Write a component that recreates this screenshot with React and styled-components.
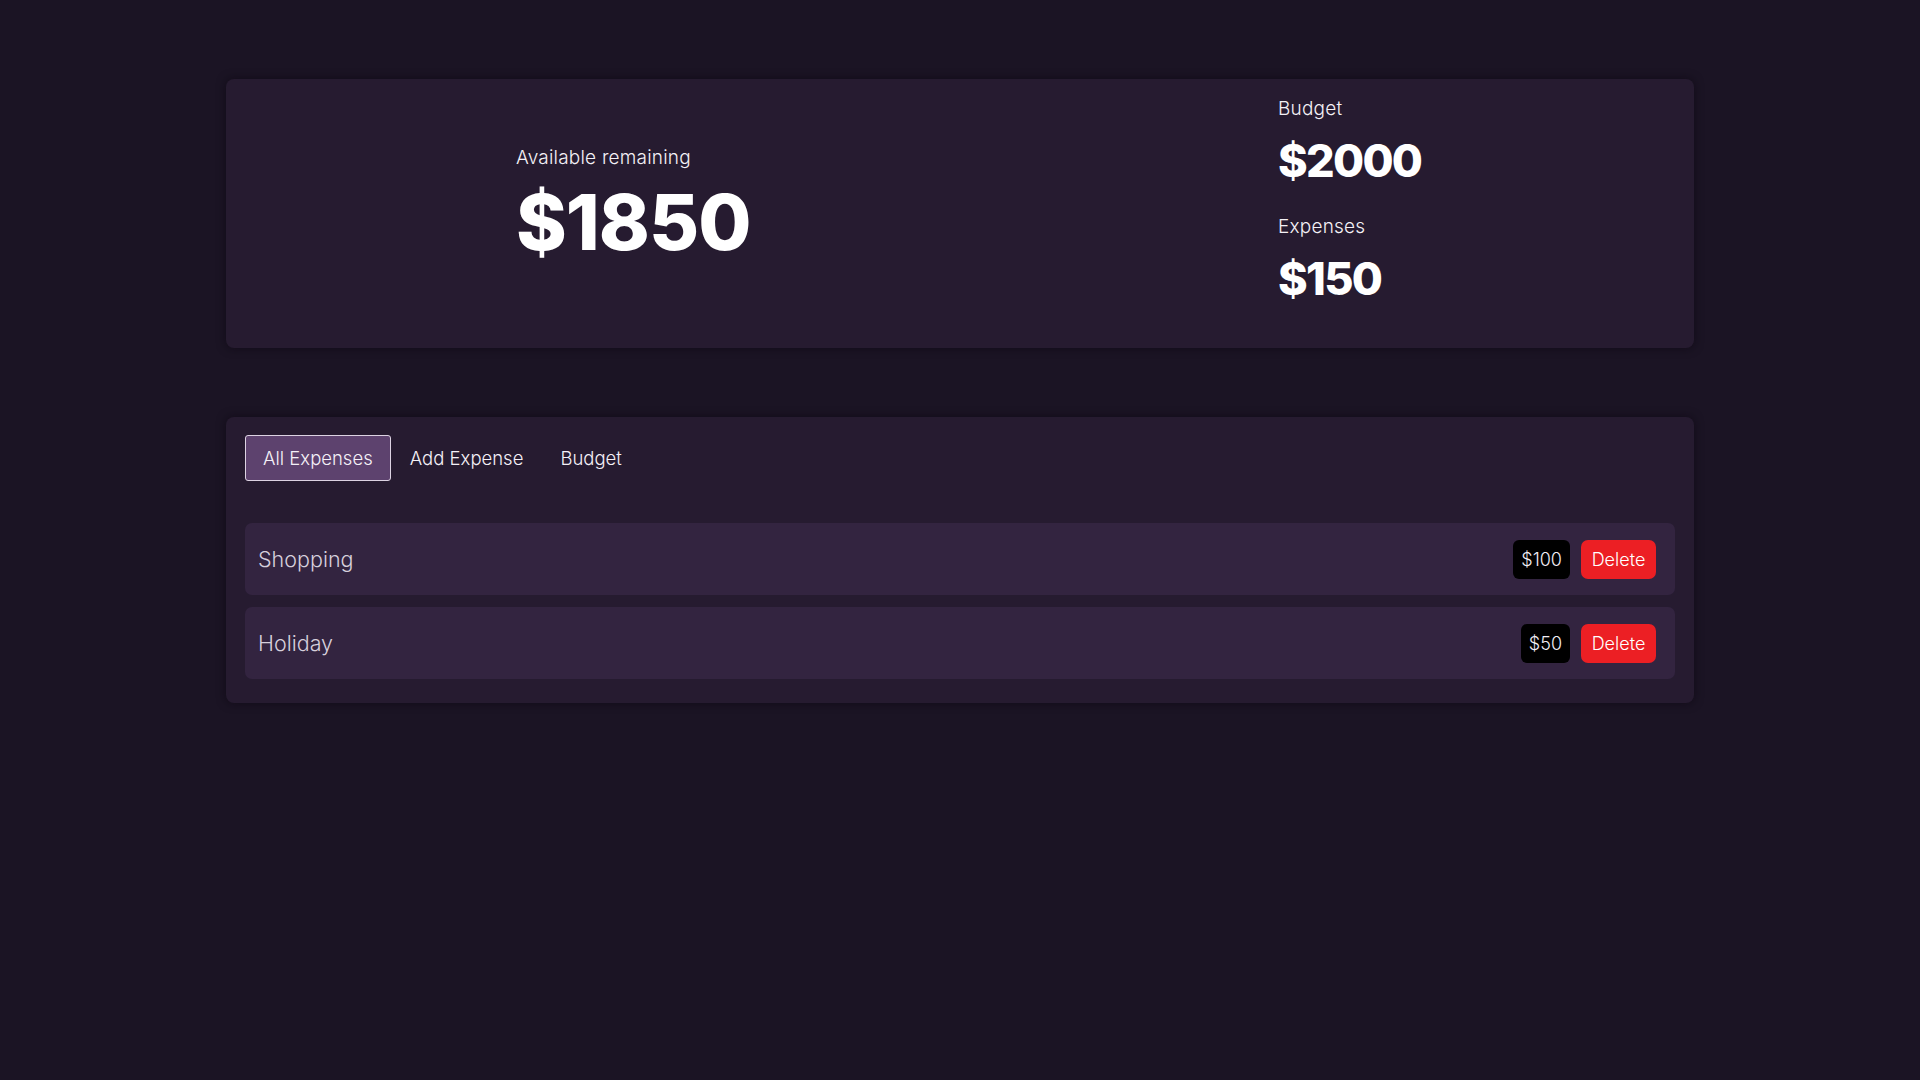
import React from "react";
import styled, { createGlobalStyle } from "styled-components";

const Global = createGlobalStyle`
  html, body { margin: 0; padding: 0; background: #1b1424; }
  body { font-family: Inter, "Open Sans", "Noto Sans", sans-serif; color: #fff; }
  * { box-sizing: border-box; }
`;

const Page = styled.div`
  min-height: 1080px;
  padding-top: 79px;
  background: #1b1424;
`;

const Container = styled.div`
  width: 1468px;
  margin: 0 auto;
  display: flex;
  flex-direction: column;
  gap: 69px;
`;

const Card = styled.section`
  background: #261b30;
  border-radius: 8px;
  box-shadow: 0 0 10px rgba(10, 5, 15, 0.6);
`;

const Summary = styled(Card)`
  height: 269px;
  display: grid;
  grid-template-columns: 734px 734px;
`;

const Remaining = styled.div`
  padding-left: 290px;
  padding-top: 65px;
`;

const Stats = styled.div`
  padding-left: 318px;
  padding-top: 16px;
  display: flex;
  flex-direction: column;
`;

const Label = styled.div`
  font-size: 19px;
  font-weight: 300;
  line-height: 27px;
  color: #f4f1f6;
  letter-spacing: 0.2px;
`;

const BigAmount = styled.div`
  font-size: 77px;
  font-weight: 800;
  line-height: 1;
  margin-top: 13px;
  letter-spacing: -1px;
`;

const Amount = styled.div`
  font-size: 45px;
  font-weight: 800;
  line-height: 1;
  margin-top: 16px;
  margin-bottom: 30px;
  letter-spacing: -1.7px;
`;

const ListCard = styled(Card)`
  padding: 18px 19px 24px;
`;

const Tabs = styled.div`
  display: flex;
  gap: 1px;
  margin-bottom: 42px;
`;

const Tab = styled.button`
  font-family: inherit;
  font-size: 18.5px;
  font-weight: 300;
  color: #f4f0f7;
  height: 46px;
  padding: 0 17px;
  border-radius: 3px;
  cursor: pointer;
  border: 1px solid ${(p) => (p.$active ? "#ddd3e3" : "transparent")};
  background: ${(p) => (p.$active ? "#5d426e" : "transparent")};
`;

const List = styled.div`
  display: flex;
  flex-direction: column;
  gap: 12px;
`;

const Row = styled.div`
  height: 72px;
  background: #332440;
  border-radius: 7px;
  display: flex;
  align-items: center;
  padding: 0 19px 0 13px;
`;

const Name = styled.span`
  flex: 1;
  font-size: 21.5px;
  font-weight: 300;
  color: #d6cfdc;
`;

const Price = styled.span`
  height: 39px;
  padding: 0 8px;
  display: inline-flex;
  align-items: center;
  background: #000;
  border-radius: 6px;
  font-size: 18px;
  font-weight: 300;
  color: #f2eef5;
  margin-right: 11px;
`;

const Delete = styled.button`
  font-family: inherit;
  height: 39px;
  width: 75px;
  border: none;
  border-radius: 7px;
  background: #ec1f24;
  color: #fff;
  font-size: 18px;
  font-weight: 300;
  cursor: pointer;
`;

const expenses = [
  { name: "Shopping", cost: 100 },
  { name: "Holiday", cost: 50 },
];

export default function App() {
  return (
    <Page>
      <Global />
      <Container>
        <Summary>
          <Remaining>
            <Label>Available remaining</Label>
            <BigAmount>$1850</BigAmount>
          </Remaining>
          <Stats>
            <Label>Budget</Label>
            <Amount>$2000</Amount>
            <Label>Expenses</Label>
            <Amount>$150</Amount>
          </Stats>
        </Summary>
        <ListCard>
          <Tabs>
            <Tab $active>All Expenses</Tab>
            <Tab>Add Expense</Tab>
            <Tab>Budget</Tab>
          </Tabs>
          <List>
            {expenses.map((e) => (
              <Row key={e.name}>
                <Name>{e.name}</Name>
                <Price>${e.cost}</Price>
                <Delete>Delete</Delete>
              </Row>
            ))}
          </List>
        </ListCard>
      </Container>
    </Page>
  );
}
